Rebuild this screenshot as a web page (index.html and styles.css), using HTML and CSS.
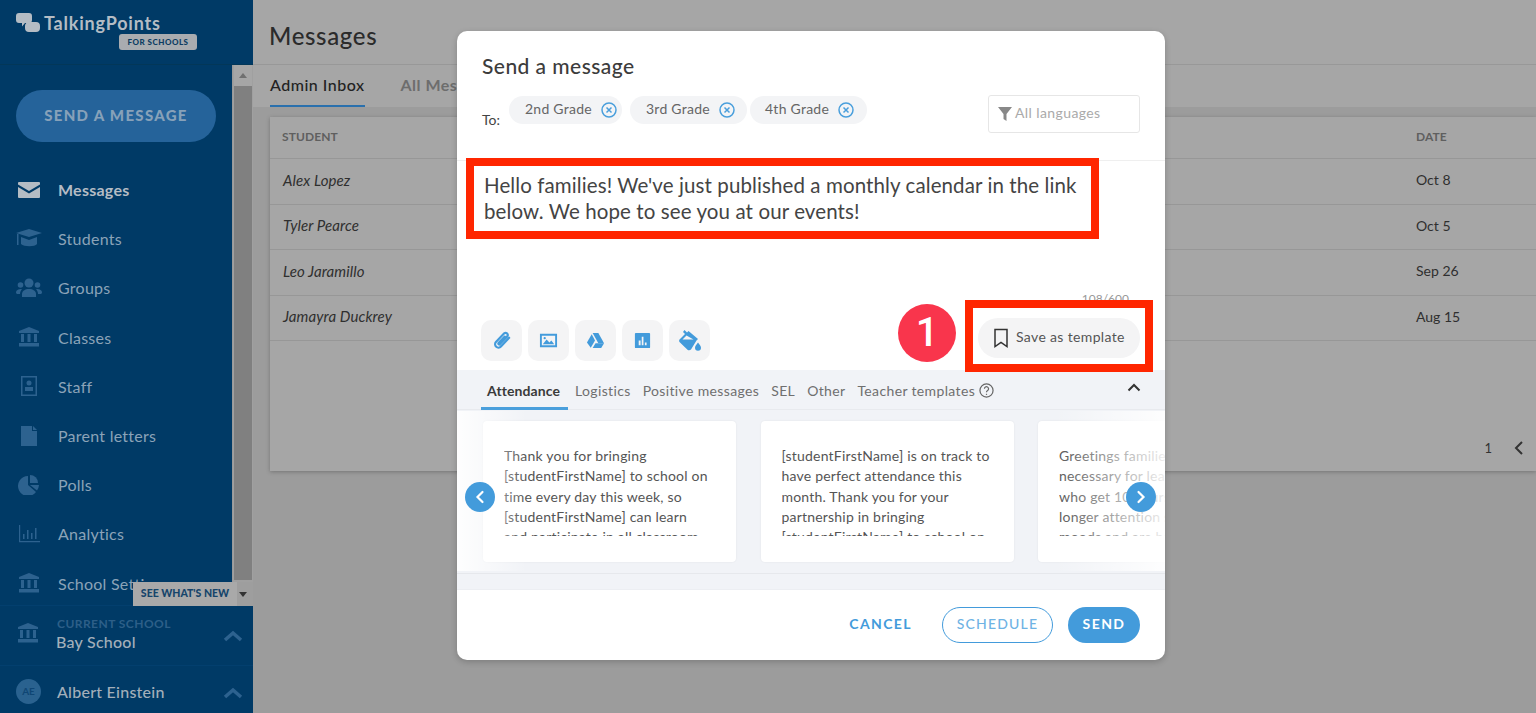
FILE: index.html
```html
<!DOCTYPE html>
<html>
<head>
	<meta charset="utf-8">
	<title>Messages</title>
	<link rel="stylesheet" href="styles.css">
</head>
<body>
	<div class="page">
		<aside class="sidebar">
			<div class="brand">
				<div class="brand-row">
					<svg class="brand-logo" viewBox="0 0 24 20"><path d="M3 0h10a3 3 0 0 1 3 3v4a3 3 0 0 1-3 3H9l-3 3.500V10H3a3 3 0 0 1-3-3V3a3 3 0 0 1 3-3z"/><path d="M14 9h6a4 4 0 0 1 4 4v2a4 4 0 0 1-4 4h-7a4 4 0 0 1-4-4v-2a4 4 0 0 1 5-4z"/></svg>
					<span class="brand-name">TalkingPoints</span>
				</div>
				<span class="brand-tag">FOR SCHOOLS</span>
			</div>
			<div class="side-scroll">
				<div class="side-main">
					<button class="send-btn">SEND A MESSAGE</button>
					<ul class="nav">
						<li class="nav-item active">
							<svg viewBox="0 0 26 20"><path d="M3 2h20a1 1 0 0 1 1 1v1.500L13 11 2 4.500V3a1 1 0 0 1 1-1z"/><path d="M2 7l11 6.500L24 7v10a1 1 0 0 1-1 1H3a1 1 0 0 1-1-1z"/></svg>
							<span>Messages</span>
						</li>
						<li class="nav-item">
							<svg viewBox="0 0 26 20"><path d="M13 0l13 4-13 4L0 4z"/><path d="M5 8l8 3 8-3v7c-2 3-13 3-16 0z"/><rect x="1" y="5" width="1.500" height="11"/></svg>
							<span>Students</span>
						</li>
						<li class="nav-item">
							<svg viewBox="0 0 26 20"><circle cx="13" cy="5" r="4.500"/><circle cx="4.500" cy="7" r="2.800"/><circle cx="21.500" cy="7" r="2.800"/><path d="M6 19v-3c0-3 3-5 7-5s7 2 7 5v3z"/><path d="M0 15c0-3 2-4 6-4-1 1-2 3-2 5H1z"/><path d="M26 15c0-3-2-4-6-4 1 1 2 3 2 5h3z"/></svg>
							<span>Groups</span>
						</li>
						<li class="nav-item">
							<svg viewBox="0 0 26 20"><path d="M13 0l10 4v2H3V4z"/><path d="M5 7h3v8H5zM11.500 7h3v8h-3zM18 7h3v8h-3z"/><path d="M3 16h20v3.500H3z"/></svg>
							<span>Classes</span>
						</li>
						<li class="nav-item">
							<svg viewBox="0 0 26 20"><path fill-rule="evenodd" d="M5 0h16v20H5zM6.500 1.500v17h13v-17z"/><circle cx="13" cy="7" r="2.500"/><path d="M9 11h8v4H9z"/></svg>
							<span>Staff</span>
						</li>
						<li class="nav-item">
							<svg viewBox="0 0 26 20"><path d="M5 0h11v5h5v15H5z"/><path d="M17 0l4 4h-4z"/></svg>
							<span>Parent letters</span>
						</li>
						<li class="nav-item">
							<svg viewBox="0 0 26 20"><path d="M12 1a10 10 0 1 0 8 16l-8-7z"/><path d="M14 0a8 8 0 0 1 8 8h-8z"/><path d="M14 10h9a10 10 0 0 1-2 5.500z"/></svg>
							<span>Polls</span>
						</li>
						<li class="nav-item">
							<svg viewBox="0 0 26 20"><path d="M3 1h1.200v16H24v1.200H3z"/><path d="M7 10h1.500v5H7zM11 6h1.500v9H11zM15 9h1.500v6H15zM19 4h1.500v11H19z"/></svg>
							<span>Analytics</span>
						</li>
						<li class="nav-item">
							<svg viewBox="0 0 26 20"><path d="M13 0l10 4v2H3V4z"/><path d="M5 7h3v8H5zM11.500 7h3v8h-3zM18 7h3v8h-3z"/><path d="M3 16h20v3.500H3z"/></svg>
							<span>School Settings</span>
						</li>
					</ul>
				</div>
				<div class="scrollbar">
					<div class="scroll-up"></div>
					<div class="scroll-thumb"></div>
				</div>
			</div>
			<div class="side-foot school">
				<svg class="foot-icon" viewBox="0 0 26 20"><path d="M13 0l10 4v2H3V4z"/><path d="M5 7h3v8H5zM11.500 7h3v8h-3zM18 7h3v8h-3z"/><path d="M3 16h20v3.500H3z"/></svg>
				<div class="foot-text">
					<small>CURRENT SCHOOL</small>
					<strong>Bay School</strong>
				</div>
				<svg class="foot-chevron" viewBox="0 0 20 12"><path d="M2 10l8-7 8 7"/></svg>
			</div>
			<div class="side-foot user">
				<span class="avatar">AE</span>
				<strong>Albert Einstein</strong>
				<svg class="foot-chevron" viewBox="0 0 20 12"><path d="M2 10l8-7 8 7"/></svg>
			</div>
			<div class="whats-new">
				<span class="whats-label">SEE WHAT'S NEW</span>
				<span class="whats-caret"></span>
			</div>
		</aside>

		<main class="content">
			<h1 class="page-title">Messages</h1>
			<div class="tabs">
				<span class="tab current">Admin Inbox</span>
				<span class="tab">All Messages</span>
			</div>
			<div class="table-wrap">
				<div class="table">
					<div class="row head"><span>STUDENT</span><span class="date">DATE</span></div>
					<div class="row"><em>Alex Lopez</em><span class="date">Oct 8</span></div>
					<div class="row"><em>Tyler Pearce</em><span class="date">Oct 5</span></div>
					<div class="row"><em>Leo Jaramillo</em><span class="date">Sep 26</span></div>
					<div class="row"><em>Jamayra Duckrey</em><span class="date">Aug 15</span></div>
					<div class="pager">
						<span>1</span>
						<svg viewBox="0 0 10 16"><path d="M8 2L2 8l6 6"/></svg>
					</div>
				</div>
			</div>
		</main>

		<section class="modal">
			<header class="modal-head">
				<h2>Send a message</h2>
				<div class="to-row">
					<span class="to-label">To:</span>
					<div class="chips">
						<span class="chip"><span>2nd Grade</span> <svg viewBox="0 0 16 16"><circle cx="8" cy="8" r="7"/><path d="M5.500 5.500l5 5M10.500 5.500l-5 5"/></svg></span>
						<span class="chip"><span>3rd Grade</span> <svg viewBox="0 0 16 16"><circle cx="8" cy="8" r="7"/><path d="M5.500 5.500l5 5M10.500 5.500l-5 5"/></svg></span>
						<span class="chip"><span>4th Grade</span> <svg viewBox="0 0 16 16"><circle cx="8" cy="8" r="7"/><path d="M5.500 5.500l5 5M10.500 5.500l-5 5"/></svg></span>
					</div>
					<div class="lang-filter">
						<svg viewBox="0 0 14 14"><path d="M0 0h14L8.500 7v7l-3-2V7z"/></svg>
						<span>All languages</span>
					</div>
				</div>
			</header>

			<div class="compose">
				<p class="msg-text">Hello families! We've just published a monthly calendar in the link below. We hope to see you at our events!</p>
				<div class="counter">108/600</div>
				<div class="toolbar">
					<div class="tools">
						<span class="tool"><svg class="clip" viewBox="0 0 20 20"><path class="line" d="M16.500 7l-7.500 8a3 3 0 0 1-4.500-4l7.500-8a2 2 0 0 1 3 2.500l-7 7.500a.8.8 0 0 1-1.200-1l5.700-6"/></svg></span>
						<span class="tool"><svg viewBox="0 0 20 20"><path fill-rule="evenodd" d="M1 3h18v14H1zM3 5v10h14V5z"/><path d="M4 14l4-5 3 3 2-2 3 4z"/><circle cx="6" cy="7.500" r="1.200"/></svg></span>
						<span class="tool"><svg viewBox="0 0 20 20"><path d="M7 2h6l6 11h-6z"/><path d="M6 3.500L9.500 10 5 17.500 1 12z"/><path d="M7 18l3-5h9l-3 5z"/></svg></span>
						<span class="tool"><svg viewBox="0 0 20 20"><path fill-rule="evenodd" d="M3 2h14a1 1 0 0 1 1 1v14a1 1 0 0 1-1 1H3a1 1 0 0 1-1-1V3a1 1 0 0 1 1-1zM6 10v5h2v-5zM9.200 6v9h1.800V6zM12.500 12v3h1.800v-3z"/></svg></span>
						<span class="tool"><svg class="bucket" viewBox="0 0 22 22"><path d="M5.500 0L8 2.500 9.500 1 19 9l-1.500 1.500-5.500 9c-1 1-2.500 1-3.500.2L1 12.500c-1.200-1-1.200-2.500 0-3.500l5-5-2-2zM7.500 5.500L3.500 9.500h11z"/><path d="M19 12.500c1.500 2.200 3 3.500 3 5.200a3 3 0 0 1-6 0c0-1.700 1.500-3 3-5.200z"/></svg></span>
					</div>
					<button class="save-tpl">
						<svg viewBox="0 0 16 20"><path d="M2 1.500h12v17l-6-4-6 4z"/></svg>
						<span>Save as template</span>
					</button>
				</div>
			</div>

			<div class="templates">
				<div class="tpl-tabs">
					<span class="tpl-tab on">Attendance</span>
					<span class="tpl-tab">Logistics</span>
					<span class="tpl-tab">Positive messages</span>
					<span class="tpl-tab">SEL</span>
					<span class="tpl-tab">Other</span>
					<span class="tpl-tab">Teacher templates
						<svg viewBox="0 0 16 16"><circle cx="8" cy="8" r="7"/><path d="M5.800 6.200a2.200 2.200 0 1 1 3.400 1.800c-.8.500-1.200 1-1.200 1.800"/><path d="M8 11.500v1.200"/></svg>
					</span>
					<svg class="collapse" viewBox="0 0 14 9"><path d="M1.500 7.500L7 2l5.500 5.500"/></svg>
				</div>
				<div class="cards">
					<div class="card"><p>Thank you for bringing [studentFirstName] to school on time every day this week, so [studentFirstName] can learn and participate in all classroom activities.</p></div>
					<div class="card"><p>[studentFirstName] is on track to have perfect attendance this month. Thank you for your partnership in bringing [studentFirstName] to school on time.</p></div>
					<div class="card"><p>Greetings families! Sleep is necessary for learning. Students who get 10 hours of sleep have longer attention spans, better moods and are happier.</p></div>
				</div>
				<div class="fade left"></div>
				<div class="fade right"></div>
				<span class="arrow prev"><svg viewBox="0 0 10 14"><path d="M7.500 2L2.500 7l5 5"/></svg></span>
				<span class="arrow next"><svg viewBox="0 0 10 14"><path d="M2.500 2l5 5-5 5"/></svg></span>
			</div>

			<footer class="modal-foot">
				<button class="btn-text">CANCEL</button>
				<button class="btn-line">SCHEDULE</button>
				<button class="btn-fill">SEND</button>
			</footer>
		</section>

		<div class="mark mark-msg"></div>
		<div class="mark mark-save"></div>
		<div class="step">1</div>
	</div>
</body>
</html>
```
FILE: styles.css
```css
*{margin: 0;padding: 0;box-sizing: border-box;}
ul{list-style: none;}
button{border: 0;background: none;font: inherit;}
html,body{height: 100%;overflow: hidden;}
body{font-family: "Lato", "Liberation Sans", sans-serif;color: #333;background: #9c9c9c;}

.page {
	display: grid;
	grid-template-columns: 253px 1fr;
	height: 713px;
	position: relative;
	overflow: hidden;
}

/* sidebar */
.sidebar {
	background: #003a66;
	display: flex;
	flex-direction: column;
	position: relative;
	height: 713px;
}
.brand {
	height: 65px;
	padding: 13px 0 0 16px;
	border-bottom: 1px solid #033758;
	position: relative;
}
.brand-row {
	display: flex;
	align-items: center;
	gap: 4px;
}
.brand-logo {
	width: 24px;
	height: 20px;
	fill: #b4bcc4;
}
.brand-name {
	font-size: 18px;
	font-weight: 700;
	color: #b4bcc4;
	letter-spacing: .8px;
	line-height: 20px;
}
.brand-tag {
	position: absolute;
	left: 119px;
	top: 34px;
	width: 78px;
	height: 16px;
	background: #a9acb0;
	color: #0c3c62;
	border-radius: 3px;
	font-size: 8px;
	font-weight: 900;
	letter-spacing: .5px;
	line-height: 16px;
	text-align: center;
}
.side-scroll {
	display: flex;
	height: 540px;
}
.side-main {
	width: 232px;
	overflow: hidden;
}
.send-btn {
	display: block;
	width: 200px;
	height: 52px;
	margin: 25px 0 0 16px;
	padding-bottom: 2px;
	border-radius: 26px;
	background: #25639a;
	color: #87a1b9;
	font-size: 15px;
	font-weight: 900;
	letter-spacing: 1.3px;
}
.nav {
	margin-top: 23px;
}
.nav-item {
	display: flex;
	align-items: center;
	height: 49.2px;
	padding-left: 16px;
	color: #8ba3b8;
	font-size: 16px;
	letter-spacing: .25px;
}
.nav-item svg {
	width: 26px;
	height: 20px;
	margin-right: 16px;
	fill: #2d628f;
	flex: none;
}
.nav-item.active {
	color: #b4bcc4;
	font-weight: 700;
}
.nav-item.active svg {
	fill: #b4bcc4;
}
.scrollbar {
	width: 21px;
	background: #a0a0a0;
	border-left: 1px solid #9a9a9a;
	padding: 0 1px 0 1px;
}
.scroll-up {
	height: 21px;
	position: relative;
	background: #a6a6a6;
}
.scroll-up:after {
	content: "";
	position: absolute;
	left: 5px;
	top: 8px;
	border: 4px solid transparent;
	border-top: 0;
	border-bottom: 5px solid #707070;
	border-left-width: 4.500px;
	border-right-width: 4.500px;
}
.scroll-thumb {
	height: 494px;
	background: #808080;
}
.side-foot {
	display: flex;
	align-items: center;
	position: relative;
	border-top: 1px solid #033f6e;
	padding-left: 16px;
	color: #a3afba;
}
.side-foot strong {
	font-size: 16px;
	font-weight: 500;
	letter-spacing: .25px;
	display: block;
}
.school {
	height: 60px;
}
.user {
	height: 48px;
}
.foot-icon {
	width: 26px;
	height: 20px;
	fill: #2d628f;
	margin: -5px 15px 0 -1px;
}
.foot-text small {
	display: block;
	font-size: 12px;
	font-weight: 700;
	letter-spacing: .45px;
	color: #2d5f88;
	line-height: 14px;
	margin: -2px 0 0 1px;
}
.foot-text strong {
	line-height: 22px;
	margin-left: 0;
}
.foot-chevron {
	position: absolute;
	right: 10px;
	top: 23px;
	width: 20px;
	height: 12px;
	fill: none;
	stroke: #2d628f;
	stroke-width: 3.500;
}
.school .foot-chevron {
	top: 24px;
}
.user .foot-chevron {
	top: 21px;
}
.avatar {
	width: 25px;
	height: 25px;
	border-radius: 50%;
	background: #2a628f;
	color: #0f4674;
	font-size: 10px;
	font-weight: 700;
	line-height: 25px;
	text-align: center;
	margin-right: 16px;
	margin-top: 4px;
}
.user strong {
	margin-top: 4px;
}
.whats-new {
	position: absolute;
	left: 133px;
	top: 582px;
	display: flex;
	height: 24px;
}
.whats-label {
	width: 104px;
	background: #a9a9a9;
	color: #16456b;
	font-size: 10.500px;
	font-weight: 900;
	line-height: 22px;
	text-align: center;
}
.whats-caret {
	width: 16px;
	background: #9e9e9e;
	position: relative;
}
.whats-caret:after {
	content: "";
	position: absolute;
	left: 1.500px;
	top: 10px;
	border: 4.500px solid transparent;
	border-bottom: 0;
	border-top: 5px solid #333;
}

/* page behind the dialog */
.content {
	display: flex;
	flex-direction: column;
	min-width: 0;
}
.page-title {
	height: 65px;
	background: #a6a6a6;
	border-bottom: 1px solid #989898;
	padding-left: 16px;
	font-size: 24px;
	font-weight: 500;
	letter-spacing: .65px;
	line-height: 72px;
	color: #2b2b2b;
}
.tabs {
	display: flex;
	height: 42px;
	background: #a6a6a6;
	padding-left: 17px;
	gap: 36px;
}
.tab {
	height: 42px;
	font-size: 16px;
	letter-spacing: .5px;
	line-height: 40px;
	color: #6d6d6d;
	font-weight: 700;
}
.tab.current {
	color: #222;
	font-weight: 500;
	border-bottom: 2px solid #2a70ad;
}
.table-wrap {
	flex: 1;
	background: #9c9c9c;
	padding: 10px 0 0 17px;
}
.table {
	height: 354px;
	background: #a6a6a6;
	box-shadow: 0 1px 4px rgba(0,0,0,.25);
	display: flex;
	flex-direction: column;
}
.row {
	display: flex;
	justify-content: space-between;
	align-items: center;
	height: 45.500px;
	padding: 0 72px 3px 13px;
	border-bottom: 1px solid #979797;
	font-size: 14px;
	color: #2f2f2f;
}
.row .date {
	width: 48px;
}
.row em {
	font-size: 15px;
	letter-spacing: .1px;
}
.row.head {
	height: 42px;
	padding-bottom: 2px;
	padding-left: 12px;
	font-size: 12px;
	font-weight: 700;
	letter-spacing: .1px;
	color: #5f5f5f;
}
.pager {
	flex: 1;
	display: flex;
	justify-content: flex-end;
	align-items: flex-end;
	gap: 22px;
	padding: 0 12px 15px 0;
	font-size: 13px;
	color: #333;
}
.pager svg {
	width: 10px;
	height: 16px;
	fill: none;
	stroke: #333;
	stroke-width: 2;
}

/* dialog */
.modal {
	position: absolute;
	left: 457px;
	top: 31px;
	width: 708px;
	height: 629px;
	background: #fff;
	border-radius: 10px;
	overflow: hidden;
	display: flex;
	flex-direction: column;
	box-shadow: 0 2px 6px rgba(0,0,0,.2);
}
.modal-head {
	height: 130px;
	padding: 21px 25px 0;
	border-bottom: 1px solid #efefef;
}
.modal-head h2 {
	font-size: 21px;
	font-weight: 500;
	line-height: 28px;
	color: #3c3c3c;
	letter-spacing: .45px;
}
.to-row {
	display: flex;
	margin-top: 16px;
}
.to-label {
	font-size: 14px;
	color: #444;
	width: 27px;
	padding-top: 15px;
}
.chips {
	display: flex;
	gap: 8px;
	flex: 1;
	align-items: flex-start;
}
.chip {
	display: flex;
	align-items: center;
	gap: 9px;
	height: 28px;
	padding: 0 0 0 16px;
	border-radius: 14px;
	background: #f3f4f6;
	font-size: 14px;
	letter-spacing: .25px;
	color: #666;
	width: 113px;
}
.chip span {
	margin-top: -3px;
}
.chip + .chip {
	width: 117px;
}
.chip + .chip + .chip {
	margin-left: -5px;
	padding-left: 15px;
}
.chip svg {
	width: 16px;
	height: 16px;
	fill: none;
	stroke: #4a9fdc;
	stroke-width: 1.500;
}
.lang-filter {
	display: flex;
	align-items: center;
	gap: 3px;
	width: 152px;
	height: 38px;
	margin-top: -1px;
	padding-left: 9px;
	border: 1px solid #e6e6e6;
	border-radius: 3px;
	font-size: 14px;
	letter-spacing: .4px;
	color: #aaa;
}
.lang-filter span {
	margin-top: -3px;
}
.lang-filter svg {
	width: 14px;
	height: 14px;
	fill: #888;
}
.compose {
	height: 209px;
	padding: 11px 25px 0 27px;
	position: relative;
}
.msg-text {
	font-size: 20.500px;
	letter-spacing: .1px;
	line-height: 26px;
	color: #444;
	height: 123px;
	width: 620px;
}
.counter {
	position: absolute;
	right: 36px;
	top: 130px;
	font-size: 12px;
	color: #999;
}
.toolbar {
	display: flex;
	justify-content: space-between;
	margin-left: -3px;
	height: 43px;
	margin-top: 25px;
}
.tools {
	display: flex;
	gap: 6px;
}
.tool {
	display: flex;
	align-items: center;
	justify-content: center;
	width: 41px;
	height: 41px;
	border-radius: 10px;
	background: #f4f4f5;
}
.tool svg {
	width: 19px;
	height: 19px;
	fill: #439bdb;
}
.tool .bucket {
	width: 22px;
	height: 22px;
}
.tool .clip {
	width: 22px;
	height: 22px;
}
.tool .line {
	fill: none;
	stroke: #439bdb;
	stroke-width: 2;
	stroke-linecap: round;
}
.save-tpl {
	display: flex;
	align-items: center;
	gap: 7px;
	width: 162px;
	height: 40px;
	margin-top: -2px;
	padding-left: 15px;
	border-radius: 20px;
	background: #f4f4f5;
	font-size: 14px;
	letter-spacing: .35px;
	color: #555;
}
.save-tpl span {
	margin-top: -3px;
}
.save-tpl svg {
	width: 16px;
	height: 20px;
	fill: none;
	stroke: #333;
	stroke-width: 1.500;
}
.templates {
	height: 219px;
	background: #f1f3f7;
	position: relative;
	overflow: hidden;
}
.tpl-tabs {
	display: flex;
	align-items: center;
	height: 40px;
	padding-left: 24px;
	border-bottom: 1px solid #e8eaee;
	position: relative;
	gap: 12px;
}
.tpl-tab {
	display: flex;
	align-items: center;
	gap: 4px;
	height: 40px;
	padding-top: 2px;
	font-size: 14px;
	letter-spacing: .36px;
	color: #6f6f6f;
}
.tpl-tab svg {
	width: 15px;
	height: 15px;
	fill: none;
	stroke: #666;
	stroke-width: 1.300;
}
.tpl-tab.on {
	width: 87px;
	margin-right: -5px;
	padding-left: 6px;
	color: #3a3a3a;
	font-weight: 700;
	letter-spacing: .1px;
	border-bottom: 3px solid #4a9fdc;
	padding-top: 5px;
}
.collapse {
	position: absolute;
	right: 24px;
	top: 13px;
	width: 14px;
	height: 9px;
	fill: none;
	stroke: #333;
	stroke-width: 2;
}
.cards {
	display: flex;
	gap: 24.500px;
	padding: 11px 0 0 26px;
	height: 164px;
	border-bottom: 1px solid #e6e8ec;
}
.card {
	flex: none;
	width: 253px;
	height: 141px;
	padding: 25px 0 0 21px;
	background: #fff;
	border-radius: 4px;
	box-shadow: 0 0 2px rgba(0,0,0,.08);
}
.card p {
	width: 210px;
	height: 90px;
	overflow: hidden;
	font-size: 14px;
	letter-spacing: .2px;
	line-height: 20.300px;
	color: #555;
}
.fade {
	position: absolute;
	top: 41px;
	height: 160px;
	pointer-events: none;
}
.fade.left {
	left: 0;
	width: 70px;
	background: linear-gradient(to right, rgba(255,255,255,.9), rgba(255,255,255,0));
}
.fade.right {
	right: 0;
	width: 110px;
	background: linear-gradient(to left, rgba(255,255,255,.9), rgba(255,255,255,0));
}
.arrow {
	position: absolute;
	top: 112px;
	width: 30px;
	height: 30px;
	border-radius: 50%;
	background: #439bdb;
	display: flex;
	align-items: center;
	justify-content: center;
}
.arrow svg {
	width: 10px;
	height: 14px;
	fill: none;
	stroke: #fff;
	stroke-width: 2.200;
	stroke-linecap: round;
}
.arrow.prev {
	left: 8px;
}
.arrow.next {
	right: 9px;
}
.modal-foot {
	flex: 1;
	display: flex;
	justify-content: flex-end;
	align-items: center;
	padding-right: 25px;
	border-top: 1px solid #eceef2;
	font-size: 14px;
	font-weight: 700;
	color: #439bdb;
}
.modal-foot button {
	height: 36px;
	padding-bottom: 3px;
	border-radius: 18px;
	font-weight: 700;
	letter-spacing: 1.400px;
}
.btn-text {
	color: #439bdb;
	margin-right: 30px;
}
.modal-foot .btn-line {
	width: 111px;
	border: 1px solid #439bdb;
	color: #6fb3e4;
	font-weight: 500;
	letter-spacing: 1.200px;
	margin-right: 15px;
}
.btn-fill {
	width: 72px;
	background: #439bdb;
	color: #fff;
}

/* annotations drawn over the screenshot */
.mark {
	position: absolute;
	border: 8px solid #ff2600;
}
.mark-msg {
	left: 466px;
	top: 158px;
	width: 633px;
	height: 81px;
}
.mark-save {
	left: 965px;
	top: 300px;
	width: 188px;
	height: 72px;
}
.step {
	position: absolute;
	left: 898px;
	top: 304px;
	width: 58px;
	height: 58px;
	border-radius: 50%;
	background: #f9354c;
	color: #fff;
	font-family: "Roboto", sans-serif;
	font-size: 40px;
	font-weight: 500;
	line-height: 57px;
	text-align: center;
}
```
